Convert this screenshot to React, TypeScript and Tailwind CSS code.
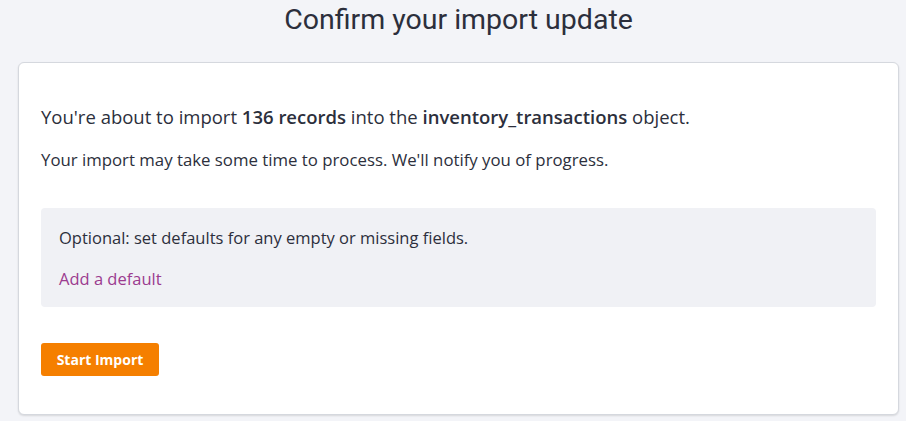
export default function App() {
  return (
    <div className="h-[421px] overflow-hidden bg-[#f3f4f8] pl-[18px] pr-[7px] pt-[2px] font-['Open_Sans',sans-serif] text-[#2c2f3c]">
      <h1 className="text-center font-['Roboto',sans-serif] text-[28.5px] leading-[36px] font-normal">
        Confirm your import update
      </h1>

      <div className="mt-[24px] rounded-md border border-[#d5d8de] bg-white px-[22px] pt-[40px] pb-[38px] shadow-[0_1px_2px_rgba(0,0,0,0.12)]">
        <p className="text-[18.5px] leading-[28px]">
          You're about to import <strong className="font-semibold">136 records</strong> into the{' '}
          <strong className="font-semibold">inventory_transactions</strong> object.
        </p>
        <p className="mt-[17px] text-[16.8px] leading-[24px]">
          Your import may take some time to process. We'll notify you of progress.
        </p>

        <div className="mt-[36px] rounded bg-[#f0f1f5] px-[18px] pt-[18px] pb-[16px]">
          <p className="text-[16.5px] leading-[24px]">Optional: set defaults for any empty or missing fields.</p>
          <button className="mt-[17px] block text-[16.5px] leading-[24px] text-[#9b3b8f]">Add a default</button>
        </div>

        <button className="mt-[36px] h-[33px] w-[118px] rounded-[3px] bg-[#f57f00] text-[14px] font-bold text-white">
          Start Import
        </button>
      </div>
    </div>
  );
}
